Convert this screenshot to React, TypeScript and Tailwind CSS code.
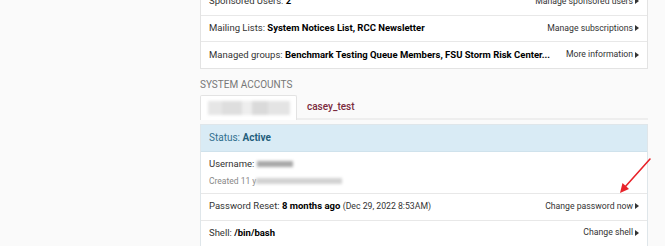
import { Fragment } from 'react';

interface Row {
  label: string;
  value: string;
  link: string;
}

const accountRows: Row[] = [
  { label: 'Sponsored Users:', value: '2', link: 'Manage sponsored users' },
  { label: 'Mailing Lists:', value: 'System Notices List, RCC Newsletter', link: 'Manage subscriptions' },
  {
    label: 'Managed groups:',
    value: 'Benchmark Testing Queue Members, FSU Storm Risk Center...',
    link: 'More information'
  }
];

function Caret() {
  return <span className="ml-[2px] inline-block h-0 w-0 border-y-[3px] border-l-[4px] border-y-transparent border-l-[#333]" />;
}

function LinkText({ text }: { text: string }) {
  return (
    <span className="flex shrink-0 items-center whitespace-nowrap text-[8.7px] text-[#333]">
      {text}
      <Caret />
    </span>
  );
}

function Blur({ className }: { className: string }) {
  return <span className={`inline-block blur-[1.5px] ${className}`} />;
}

export default function App() {
  return (
    <div className="relative h-[246px] w-[665px] overflow-hidden bg-[#fafafa] font-['Roboto',sans-serif] text-[9.5px] text-[#333]">
      <div className="ml-[200px] w-[448px]">
        <div className="-mt-[13px] border border-[#e3e3e3] bg-white">
          {accountRows.map((row, i) => (
            <div
              key={row.label}
              className={`flex h-[26.5px] items-center justify-between gap-[8px] whitespace-nowrap px-[8px] ${i > 0 ? 'border-t border-[#e8e8e8]' : ''}`}
            >
              <span>
                {row.label} <b className="font-bold text-black">{row.value}</b>
              </span>
              <LinkText text={row.link} />
            </div>
          ))}
        </div>

        <div className="mt-[9px] text-[10px] uppercase leading-[14px] text-[#777]">System Accounts</div>

        <div className="mt-[3px] flex h-[25px] items-stretch">
          <div className="flex w-[97px] items-center justify-center rounded-t-[2px] border border-b-0 border-[#e3e3e3] bg-white">
            <span className="flex h-[15px] items-center blur-[1.5px]">
              <span className="h-[14px] w-[14px] bg-[#e6e6e6]" />
              <span className="h-[14px] w-[20px] bg-[#dedede]" />
              <span className="h-[14px] w-[10px] bg-[#eeeeee]" />
              <span className="h-[14px] w-[16px] bg-[#dadada]" />
              <span className="h-[14px] w-[22px] bg-[#e4e4e4]" />
            </span>
          </div>
          <div className="flex flex-1 items-center border-b-2 border-[#eeeeee] pl-[10px] text-[10px] font-medium text-[#7b2a3e]">
            casey_test
          </div>
        </div>

        <div className="mt-[4px] border border-[#dfe6ea] bg-white">
          <div className="flex h-[27px] items-center border-b border-[#cfe2ec] bg-[#d9ebf5] px-[8px] text-[10px] text-[#31708f]">
            Status:&nbsp;<b className="font-bold text-[#245e7c]">Active</b>
          </div>
          <div className="flex h-[42px] flex-col justify-center gap-[4px] border-b border-[#e8e8e8] px-[8px]">
            <span className="flex items-center">
              Username:&nbsp;
              <Blur className="h-[6px] w-[36px] bg-[#a8a8a8]" />
            </span>
            <span className="flex items-center text-[8.5px] text-[#888]">
              Created 11 y
              <Blur className="h-[6px] w-[86px] bg-[#d2d2d2]" />
            </span>
          </div>
          {[
            {
              key: 'pw',
              body: (
                <Fragment>
                  Password Reset: <b className="font-bold text-black">8 months ago</b>{' '}
                  <span className="text-[8.7px]">(Dec 29, 2022 8:53AM)</span>
                </Fragment>
              ),
              link: 'Change password now'
            },
            {
              key: 'shell',
              body: (
                <Fragment>
                  Shell: <b className="font-bold text-black">/bin/bash</b>
                </Fragment>
              ),
              link: 'Change shell'
            }
          ].map((row, i) => (
            <div
              key={row.key}
              className={`flex h-[26px] items-center justify-between px-[8px] ${i > 0 ? 'border-t border-[#e8e8e8]' : ''}`}
            >
              <span>{row.body}</span>
              <LinkText text={row.link} />
            </div>
          ))}
        </div>
      </div>

      <svg className="absolute left-0 top-0" width="665" height="246" viewBox="0 0 665 246">
        <line x1="650" y1="159" x2="625" y2="187" stroke="#e8232a" strokeWidth="1.6" strokeLinecap="round" />
        <polygon points="620,193 622.5,183 629,189" fill="#e8232a" />
      </svg>
    </div>
  );
}
